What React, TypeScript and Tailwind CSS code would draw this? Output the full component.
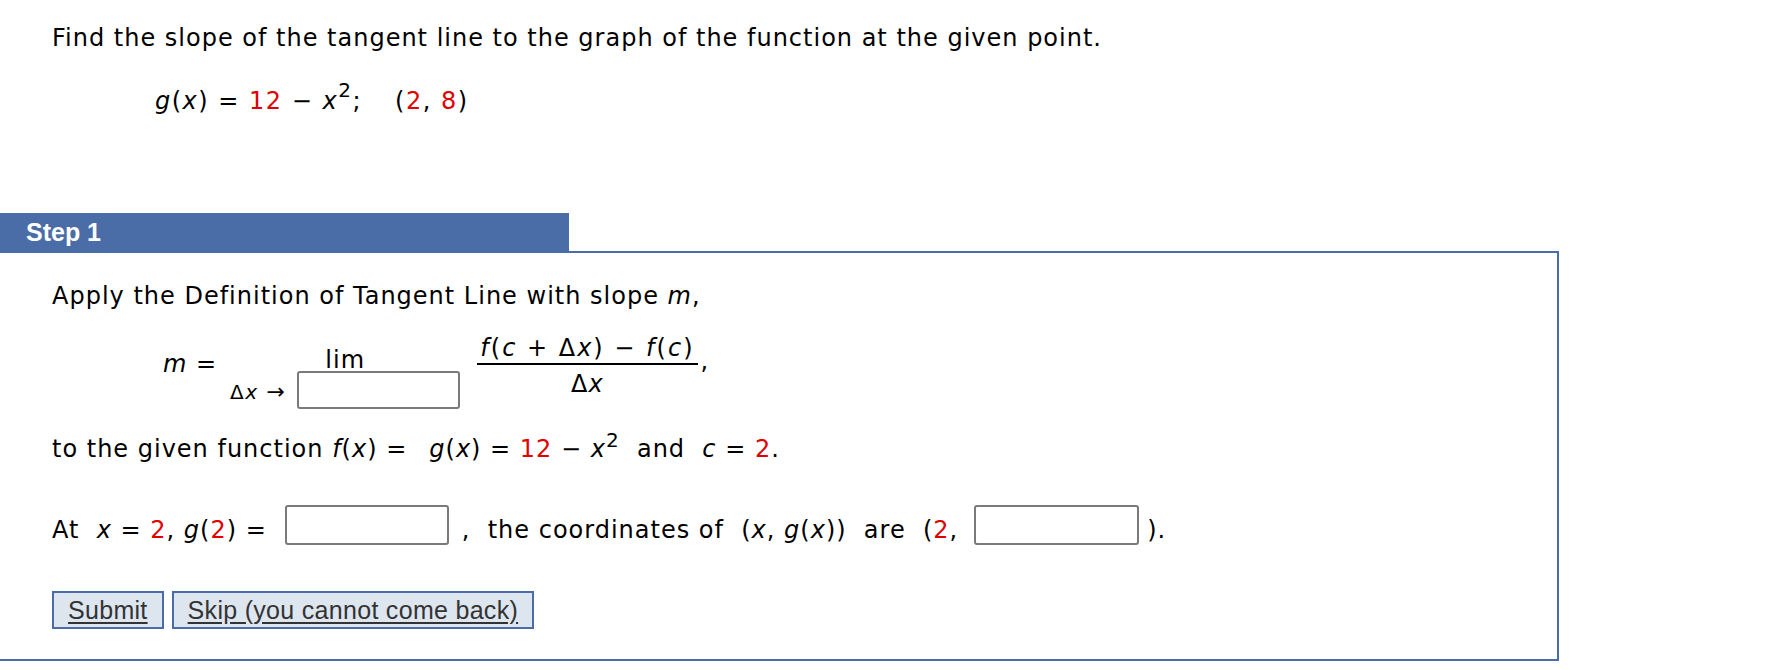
import React from "react";

const R = ({ children }: { children: React.ReactNode }) => (
  <span className="text-[#e00000]">{children}</span>
);
const I = ({ children }: { children: React.ReactNode }) => (
  <span className="italic">{children}</span>
);

const Box = ({ w, h }: { w: string; h: string }) => (
  <span className={`${w} ${h} inline-block border-2 border-[#7a7a7a] rounded-[3px] bg-white`} />
);

export default function App() {
  return (
    <div className="w-[1778px] h-[670px] bg-white overflow-hidden text-black text-[24px] tracking-[1px] font-['DejaVu_Sans',Verdana,sans-serif]">
      <div className="pt-[24px] pl-[52px] leading-[28px] whitespace-pre">
        Find the slope of the tangent line to the graph of the function at the given point.
      </div>
      <div className="mt-[35px] pl-[155px] leading-[28px] whitespace-pre tracking-[1.5px]">
        <I>g</I>(<I>x</I>) = <R>12</R> − <I>x</I>
        <span className="relative top-[-12px] text-[20px]">2</span>;
        <span className="ml-[33px]">(</span>
        <R>2</R>, <R>8</R>)
      </div>

      <div className="mt-[97px] w-[569px] h-[38px] bg-[#4a6da7] pl-[26px] pt-[2px] flex items-center">
        <span className="text-white font-bold tracking-normal font-['Liberation_Sans',Arial,sans-serif] text-[25px]">
          Step 1
        </span>
      </div>

      <div className="w-[1559px] border-t-2 border-r-2 border-b-2 border-[#4a6da7] pl-[52px] pt-[29px] pb-[30px]">
        <div className="leading-[28px] whitespace-pre">
          Apply the Definition of Tangent Line with slope <I>m</I>,
        </div>

        <div className="mt-[26px] flex items-start">
          <div className="ml-[111px] w-[67px] mt-[14px] leading-[28px] whitespace-pre">
            <I>m</I> =
          </div>
          <div className="mt-[13px] flex flex-col items-center">
            <div className="leading-[22px]">lim</div>
            <div className="flex items-center gap-[11px]">
              <span className="text-[20px] pt-[2px] whitespace-pre tracking-[1.5px]">
                Δ<I>x</I> <span className="text-[22px]">→</span>
              </span>
              <Box w="w-[163px]" h="h-[38px]" />
            </div>
          </div>
          <div className="ml-[17px] flex flex-col items-center">
            <div className="leading-[24px] px-[3px] pb-[3px] whitespace-pre tracking-[2px]">
              <I>f</I>(<I>c</I> + Δ<I>x</I>) − <I>f</I>(<I>c</I>)
            </div>
            <div className="h-[2px] w-full bg-black" />
            <div className="mt-[7px] leading-[24px]">
              Δ<I>x</I>
            </div>
          </div>
          <div className="ml-[3px] mt-[11px] leading-[28px]">,</div>
        </div>

        <div className="mt-[26px] leading-[28px] whitespace-pre">
          to the given function <I>f</I>(<I>x</I>) =<span className="ml-[22px]"><I>g</I>(<I>x</I>) = <R>12</R> − <I>x</I></span>
          <span className="relative top-[-10px] text-[20px]">2</span>  and  <I>c</I> = <R>2</R>.
        </div>

        <div className="mt-[46px] h-[40px] flex items-center whitespace-pre">
          <span>At  <I>x</I> = <R>2</R>, <I>g</I>(<R>2</R>) =</span>
          <span className="ml-[18px]">
            <Box w="w-[164px]" h="h-[40px]" />
          </span>
          <span className="ml-[13px]">,  the coordinates of  (<I>x</I>, <I>g</I>(<I>x</I>))  are  (<R>2</R>,</span>
          <span className="ml-[16px]">
            <Box w="w-[165px]" h="h-[40px]" />
          </span>
          <span className="ml-[8px]">).</span>
        </div>

        <div className="mt-[41px] flex gap-[8px] tracking-[0.3px] font-['Liberation_Sans',Arial,sans-serif] text-[25px] text-[#333333]">
          <button className="h-[38px] px-[14px] bg-[#dde5ef] border-2 border-[#4a6da7] underline underline-offset-[3px] leading-none">
            Submit
          </button>
          <button className="h-[38px] px-[14px] bg-[#dde5ef] border-2 border-[#4a6da7] underline underline-offset-[3px] leading-none">
            Skip (you cannot come back)
          </button>
        </div>
      </div>
    </div>
  );
}
